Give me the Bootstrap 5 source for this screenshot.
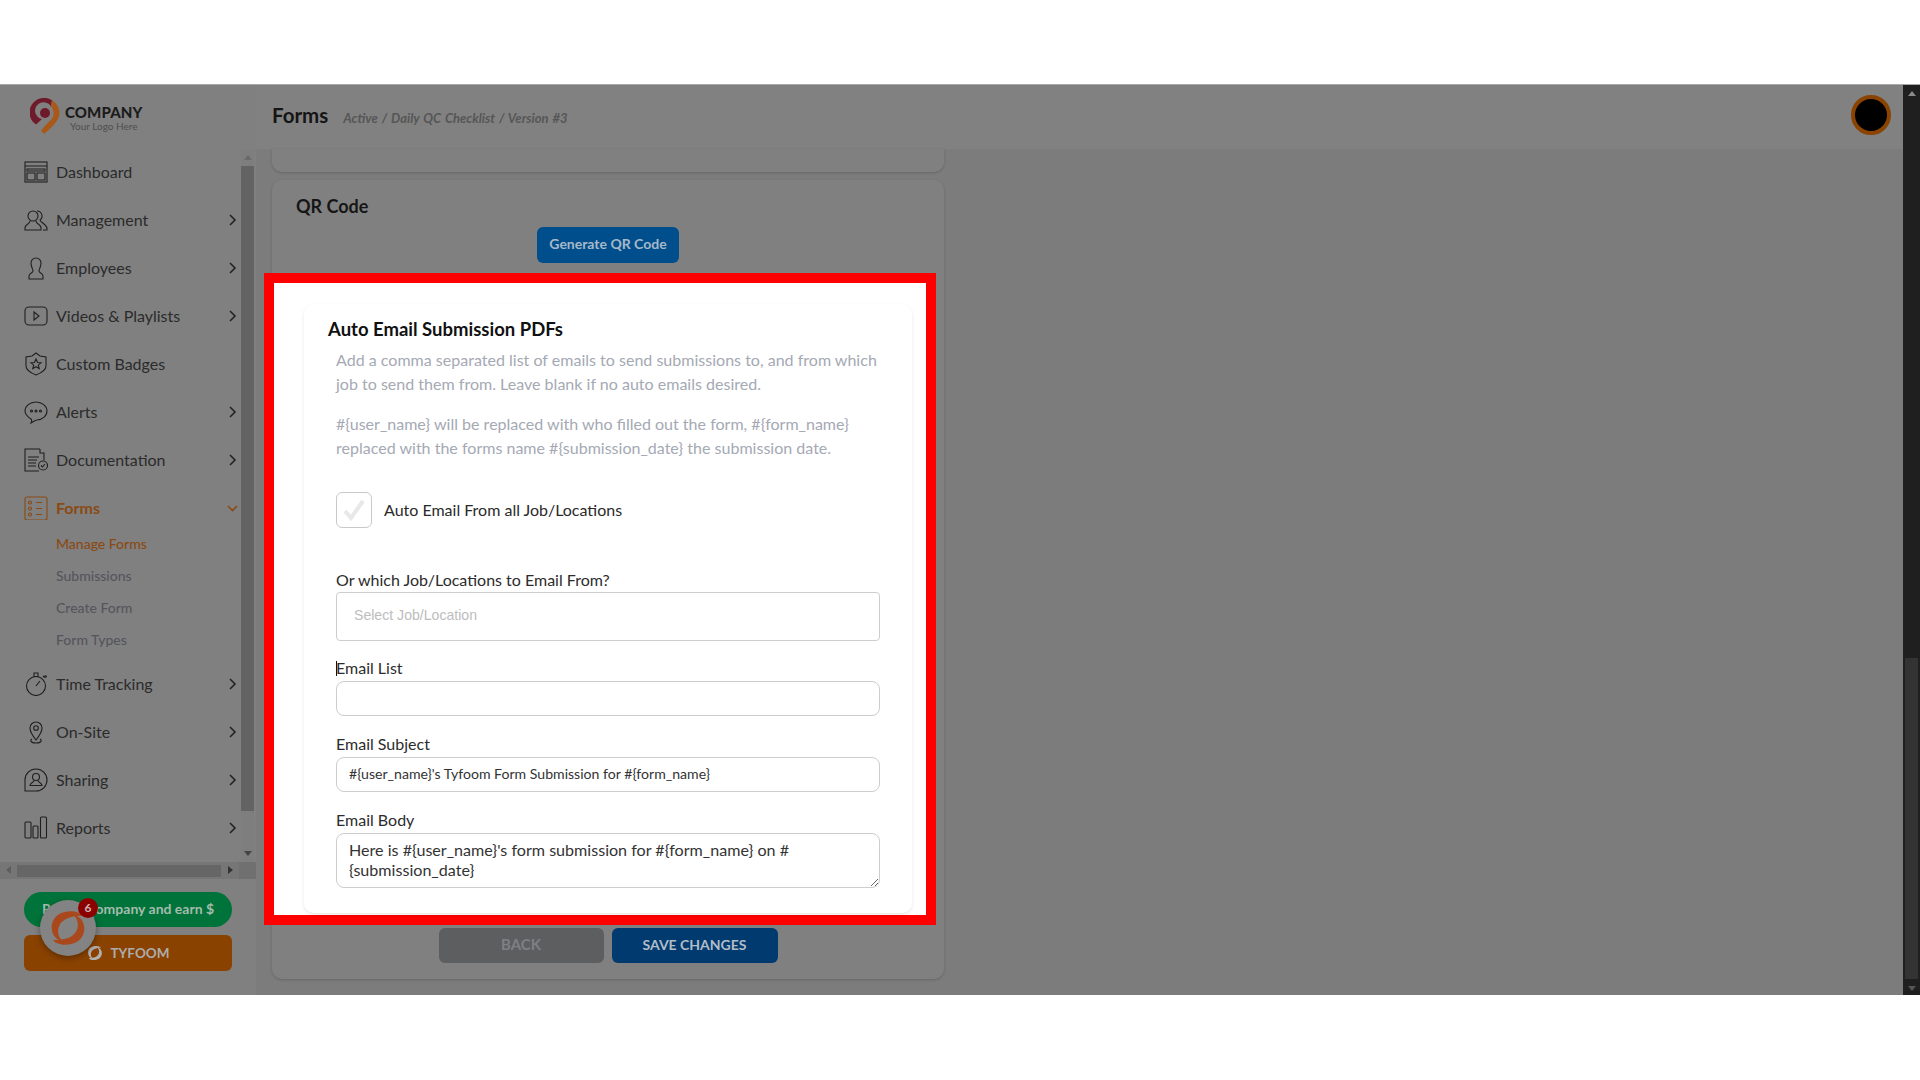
<!DOCTYPE html>
<html lang="en">
<head>
<meta charset="utf-8">
<title>Forms</title>
<link href="https://cdn.jsdelivr.net/npm/bootstrap@5.3.0/dist/css/bootstrap.min.css" rel="stylesheet">
<style>
html,body{height:100%;overflow:hidden;background:#fff;font-family:"Lato","Liberation Sans",sans-serif}
.app-shell{margin-top:84px;height:911px;background:#7c7c7c;position:relative;border-top:1px solid #a8a8a8}
.side-col{width:256px;background:#808080;flex:none}
.brand{height:65px;padding:13px 0 0 30px;gap:5px}
.brand-name{font-weight:900;font-size:15px;line-height:16px;color:#1c1c1c;letter-spacing:.1px;margin-top:6px}
.brand-tag{font-size:10px;line-height:12px;color:#4f4f4f;text-align:center}
.side-view{height:712px}
.side-list{width:241px;margin-top:-2px}
.side-item{height:48px;padding:0 5px 0 24px;font-size:16px;color:#2b2b2b;gap:8px}
.side-item svg.ico{width:24px;height:24px;flex:none;stroke:#1f1f1f;fill:none;stroke-width:1.1}
.side-item .chev{width:9px;height:12px;margin-left:auto;margin-right:-1px;stroke:#222;fill:none;stroke-width:1.6}
.side-item.on{color:#8a4a14;font-weight:700}
.side-item.on svg.ico{stroke:#8a4a14}
.side-item.on .chev{stroke:#8a4a14;width:11px;margin-right:-2px}
.sub-list{margin:-4px 0 4px}
.sub-item{height:32px;padding-left:56px;font-size:14px;color:#55565c;line-height:32px;font-weight:500}
.sub-item.on{color:#8a4a14}
.vbar{width:13px;left:241px;top:0;bottom:0;background:#7e7e7e}
.vthumb{position:absolute;left:0;right:0;top:16px;height:645px;background:#636363}
.arr-u,.arr-d{position:absolute;width:0;height:0;border-left:4px solid transparent;border-right:4px solid transparent}
.arr-u{border-bottom:5px solid #6a6a6a}
.arr-d{border-top:5px solid #444}
.hbar{height:17px;background:#767676;width:256px}
.hthumb{position:absolute;left:17px;top:3px;width:204px;height:12px;background:#666}
.h-left,.h-right{position:absolute;top:4px;width:0;height:0;border-top:4px solid transparent;border-bottom:4px solid transparent}
.h-left{left:6px;border-right:5px solid #5e5e5e}
.h-right{left:228px;border-left:5px solid #333}
.h-corner{position:absolute;left:239px;top:0;width:17px;height:17px;background:#707070}
.side-foot{padding:13px 24px 0;gap:8px}
.refer-btn{height:35px;background:#00733a;color:#a4bcab;border-radius:18px;font-size:14px;font-weight:700;border:0;padding:0 0 2px}
.tyfoom-btn{height:36px;background:#8a4200;color:#adadad;border-radius:6px;font-size:13.5px;font-weight:700;border:0;gap:8px}
.float-logo{position:absolute;left:40px;top:815px;width:56px;height:56px;border-radius:50%;background:#838383;box-shadow:0 2px 6px rgba(0,0,0,.35)}
.float-badge{position:absolute;left:38px;top:-2px;width:20px;height:20px;border-radius:50%;background:#8b0000;color:#c9b4b4;font-size:12px;font-weight:700;line-height:20px;text-align:center}
.head-bar{height:64px;background:#818181;padding:0 12px 4px 16px}
.page-title{font-size:20.5px;font-weight:700;color:#151515;margin-top:0}
.crumbs{font-size:13px;font-style:italic;font-weight:700;color:#565656;margin:7px 0 0 15px;word-spacing:1px}
.avatar{width:40px;height:40px;border-radius:50%;background:#000;border:4px solid #8a4300}
.content-col{padding-left:16px}
.dim-card{width:672px;background:#808080;border-radius:10px;box-shadow:0 1px 3px rgba(0,0,0,.18)}
.stub{height:23px;border-radius:0 0 10px 10px}
.qr-card{margin-top:8px;height:799px;padding:14px 0 0}
.qr-title{font-size:18px;font-weight:700;color:#161616;padding-left:24px;line-height:24px;margin-bottom:9px}
.gen-btn{width:142px;height:36px;background:#004f8c;color:#a7b8c8;border:0;border-radius:6px;font-size:14px;font-weight:700;padding:0 0 4px}
.hl-frame{margin:10px 8px 3px -8px;border:10px solid #fe0000;background:#fff;padding:21px 14px 3px 30px;height:652px}
.mail-card{height:609px;border-radius:10px;background:#fff;box-shadow:0 2px 4px rgba(0,0,0,.09);padding:13px 32px 0}
.mail-title{font-size:18.5px;font-weight:700;color:#111;line-height:24px;margin-left:-8px}
.mail-text{font-size:16.05px;line-height:24px;color:#a5a9b4;margin:16px 0 0}
.mail-text.first{margin-top:7px}
.check-row{margin-top:32px;gap:12px;font-size:16px;color:#2a2a2a}
.big-check{width:36px;height:36px;border:1.5px solid #c9c9c9;border-radius:6px;background:#fff;flex:none}
.lbl{font-size:16px;line-height:24px;color:#2c2c2c;margin:0 0 1px;display:block}
.fld{margin-top:16px}
.fld.list-fld{margin-top:15px}
.fld.pick{margin-top:40px}
.form-control.inp{height:35px;border:1.5px solid #cdcdcd;border-radius:8px;font-size:14.1px;color:#333;padding:0 12px 2px;font-family:inherit;box-shadow:none}
.form-control.pick-inp{height:49px;border-radius:4px;padding:0 0 3px 17px;font-family:"Liberation Sans",sans-serif;margin-top:-1px}
.form-control.pick-inp::placeholder{color:#bdbdbd;opacity:1}
textarea.form-control.inp{height:55px;font-size:16.1px;line-height:20px;padding:6px 12px}
.caret-lbl{position:relative}
.caret-lbl::before{content:"";position:absolute;left:0;top:5px;width:1px;height:15px;background:#111}
.btn-back,.btn-save{height:35px;border:0;border-radius:6px;font-weight:700;padding:0 0 3px;text-transform:uppercase}
.btn-back{width:165px;font-size:15px;background:#5d5e60;color:#7e8084}
.btn-save{width:166px;font-size:14px;background:#003a6e;color:#b2bdc8}
.page-bar{width:17px;background:#1f1f1f;flex:none;position:relative}
.page-thumb{position:absolute;left:2px;right:2px;top:573px;height:321px;background:#333}
</style>
</head>
<body>
<div class="app-shell d-flex">
  <aside class="side-col d-flex flex-column">
    <div class="brand d-flex">
      <svg width="30" height="36" viewBox="0 0 30 36"><path d="M22 2.300A14.500 14.500 0 1 0 6 26.500L12 21A8.500 8.500 0 1 1 21 8.500z" fill="#6f1a2b"/><path d="M22 2.300c4.500 2.700 7.500 7.500 7.500 12.700 0 8-9.500 16-15.500 21l-3-3.500 7-8c4-3 6-6.500 5.500-10-.3-2.500-1-4.700-2.500-6z" fill="#a8591a"/><circle cx="15" cy="15" r="5" fill="#6f1a2b"/></svg>
      <div><div class="brand-name">COMPANY</div><div class="brand-tag">Your Logo Here</div></div>
    </div>
    <div class="side-view position-relative overflow-hidden">
      <div class="side-list">
        <div class="side-item d-flex align-items-center"><svg class="ico" viewBox="0 0 24 24"><rect x="1" y="2" width="22" height="20"/><path d="M1 6h22M3 9h18v2H3zM3 13h8v7H3zM13 13h8v7h-8z"/></svg>Dashboard</div>
        <div class="side-item d-flex align-items-center"><svg class="ico" viewBox="0 0 24 24"><circle cx="9" cy="8" r="5"/><path d="M6 13c0 3-5 3-5 7v2h16v-2c0-4-5-4-5-7M13 3a5 5 0 0 1 3 9c0 2 6 4 7 8v2h-4"/></svg>Management<svg class="chev" viewBox="0 0 9 12"><path d="M2 1l5 5-5 5"/></svg></div>
        <div class="side-item d-flex align-items-center"><svg class="ico" viewBox="0 0 24 24"><path d="M12 2a5 5 0 0 1 5 5c0 4-2 6-2 8 0 2 4 2 4 5v3H5v-3c0-3 4-3 4-5 0-2-2-4-2-8a5 5 0 0 1 5-5z"/></svg>Employees<svg class="chev" viewBox="0 0 9 12"><path d="M2 1l5 5-5 5"/></svg></div>
        <div class="side-item d-flex align-items-center"><svg class="ico" viewBox="0 0 24 24"><rect x="1" y="3" width="22" height="18" rx="4"/><path d="M10 8l5 4-5 4z"/></svg>Videos &amp; Playlists<svg class="chev" viewBox="0 0 9 12"><path d="M2 1l5 5-5 5"/></svg></div>
        <div class="side-item d-flex align-items-center"><svg class="ico" viewBox="0 0 24 24"><path d="M12 1l4 3 6 1v9c0 4-5 7-10 9-5-2-10-5-10-9V5l6-1z"/><path d="M12 7l1.5 3.5 3.5.3-2.700 2.300.9 3.500L12 14.700 8.800 16.600l.9-3.500L7 10.800l3.500-.3z"/></svg>Custom Badges</div>
        <div class="side-item d-flex align-items-center"><svg class="ico" viewBox="0 0 24 24"><path d="M12 2c6 0 11 4 11 9s-5 9-10 9c-2 0-4 2-6 3 1-2 1-3 0-4-3-2-6-4-6-8 0-5 5-9 11-9z"/><circle cx="7.500" cy="11" r="1"/><circle cx="12" cy="11" r="1"/><circle cx="16.500" cy="11" r="1"/></svg>Alerts<svg class="chev" viewBox="0 0 9 12"><path d="M2 1l5 5-5 5"/></svg></div>
        <div class="side-item d-flex align-items-center"><svg class="ico" viewBox="0 0 24 24"><path d="M16 1H1v22h14M16 1v4h4v7"/><path d="M4 9h11M4 12h9M4 15h8M4 18h8"/><circle cx="19" cy="17.500" r="4.500"/><path d="M17 17.500l1.500 1.500 2.500-3"/></svg>Documentation<svg class="chev" viewBox="0 0 9 12"><path d="M2 1l5 5-5 5"/></svg></div>
        <div class="side-item on d-flex align-items-center"><svg class="ico" viewBox="0 0 24 24"><rect x="1" y="1" width="22" height="23" rx="2"/><circle cx="6" cy="6.500" r="1.500"/><circle cx="6" cy="12.500" r="1.500"/><circle cx="6" cy="18.500" r="1.500"/><path d="M12 6.500h6M12 12.500h6M12 18.500h6"/></svg>Forms<svg class="chev" viewBox="0 0 11 12"><path d="M1 4l4.500 4.500L10 4"/></svg></div>
        <div class="sub-list">
          <div class="sub-item on">Manage Forms</div>
          <div class="sub-item">Submissions</div>
          <div class="sub-item">Create Form</div>
          <div class="sub-item">Form Types</div>
        </div>
        <div class="side-item d-flex align-items-center"><svg class="ico" viewBox="0 0 24 24"><circle cx="12" cy="14" r="9.500"/><path d="M10 1h4v3.500h-4zM12 14l4-5M19 4l1.500 1.500"/><circle cx="21.500" cy="4.500" r=".8"/></svg>Time Tracking<svg class="chev" viewBox="0 0 9 12"><path d="M2 1l5 5-5 5"/></svg></div>
        <div class="side-item d-flex align-items-center"><svg class="ico" viewBox="0 0 24 24"><path d="M12 20C8 15 6 12 6 8a6 6 0 0 1 12 0c0 4-2 7-6 12z"/><circle cx="12" cy="8" r="2.300"/><path d="M8 19c-2 1-2 4 4 4s6-3 4-4"/></svg>On-Site<svg class="chev" viewBox="0 0 9 12"><path d="M2 1l5 5-5 5"/></svg></div>
        <div class="side-item d-flex align-items-center"><svg class="ico" viewBox="0 0 24 24"><path d="M1 23V12a11 11 0 1 1 11 11z"/><circle cx="12" cy="9" r="3.500"/><path d="M10 12.500c0 2-4 2-4 5h12c0-3-4-3-4-5"/></svg>Sharing<svg class="chev" viewBox="0 0 9 12"><path d="M2 1l5 5-5 5"/></svg></div>
        <div class="side-item d-flex align-items-center"><svg class="ico" viewBox="0 0 24 24"><rect x="1" y="6" width="6" height="16" rx="1"/><rect x="9" y="10" width="5" height="12" rx="1"/><rect x="16.500" y="1" width="6" height="21" rx="1"/></svg>Reports<svg class="chev" viewBox="0 0 9 12"><path d="M2 1l5 5-5 5"/></svg></div>
      </div>
      <div class="vbar position-absolute"><div class="vthumb"></div><span class="arr-u" style="left:2.500px;top:5px"></span><span class="arr-d" style="left:2.500px;top:701px"></span></div>
    </div>
    <div class="hbar position-relative"><div class="hthumb"></div><span class="h-left"></span><span class="h-right"></span><div class="h-corner"></div></div>
    <div class="side-foot d-flex flex-column">
      <button class="refer-btn d-flex align-items-center justify-content-center">Refer a company and earn $</button>
      <button class="tyfoom-btn d-flex align-items-center justify-content-center"><svg width="16" height="16" viewBox="0 0 56 56"><path d="M50 10C44 3 28 0 14 8 3 15 1 30 8 40c3 4 8 7 13 8-6-5-9-12-7-20 2-9 10-14 18-16 7-2 13-2 18-2z" fill="#b0b0b0"/><path d="M6 46c6 7 22 10 36 2 11-7 13-22 6-32-3-4-8-7-13-8 6 5 9 12 7 20-2 9-10 14-18 16-7 2-13 2-18 2z" fill="#b0b0b0"/></svg>TYFOOM</button>
    </div>
  </aside>
  <div class="flex-grow-1 d-flex flex-column">
    <header class="head-bar d-flex align-items-center">
      <div class="page-title">Forms</div>
      <div class="crumbs">Active / Daily QC Checklist / Version #3</div>
      <div class="avatar ms-auto"></div>
    </header>
    <main class="content-col flex-grow-1">
      <div class="dim-card stub"></div>
      <section class="dim-card qr-card">
        <div class="qr-title">QR Code</div>
        <div class="text-center"><button class="gen-btn btn">Generate QR Code</button></div>
        <div class="hl-frame">
          <div class="mail-card">
            <div class="mail-title">Auto Email Submission PDFs</div>
            <p class="mail-text first">Add a comma separated list of emails to send submissions to, and from which job to send them from. Leave blank if no auto emails desired.</p>
            <p class="mail-text">#{user_name} will be replaced with who filled out the form, #{form_name} replaced with the forms name #{submission_date} the submission date.</p>
            <div class="check-row d-flex align-items-center">
              <span class="big-check d-flex align-items-center justify-content-center"><svg width="24" height="24" viewBox="0 0 24 24"><path d="M3 13l6 7L21 3" fill="none" stroke="#e8e8e8" stroke-width="4"/></svg></span>
              <span>Auto Email From all Job/Locations</span>
            </div>
            <div class="fld pick">
              <label class="lbl">Or which Job/Locations to Email From?</label>
              <input class="form-control inp pick-inp" placeholder="Select Job/Location">
            </div>
            <div class="fld list-fld">
              <label class="lbl caret-lbl">Email List</label>
              <input class="form-control inp">
            </div>
            <div class="fld">
              <label class="lbl">Email Subject</label>
              <input class="form-control inp" value="#{user_name}'s Tyfoom Form Submission for #{form_name}">
            </div>
            <div class="fld">
              <label class="lbl">Email Body</label>
              <textarea class="form-control inp">Here is #{user_name}'s form submission for #{form_name} on #{submission_date}</textarea>
            </div>
          </div>
        </div>
        <div class="d-flex justify-content-center gap-2">
          <button class="btn btn-back">Back</button>
          <button class="btn btn-save">Save Changes</button>
        </div>
      </section>
    </main>
  </div>
  <div class="page-bar"><span class="arr-u" style="left:4.500px;top:6px;border-bottom-color:#8a8a8a"></span><div class="page-thumb"></div><span class="arr-d" style="left:4.500px;top:901px;border-top-color:#555"></span></div>
  <div class="float-logo d-flex align-items-center justify-content-center">
    <svg width="38" height="38" viewBox="0 0 56 56"><path d="M50 10C44 3 28 0 14 8 3 15 1 30 8 40c3 4 8 7 13 8-6-5-9-12-7-20 2-9 10-14 18-16 7-2 13-2 18-2z" fill="#a8481c"/><path d="M6 46c6 7 22 10 36 2 11-7 13-22 6-32-3-4-8-7-13-8 6 5 9 12 7 20-2 9-10 14-18 16-7 2-13 2-18 2z" fill="#a8481c"/></svg>
    <span class="float-badge">6</span>
  </div>
</div>
<script src="https://cdn.jsdelivr.net/npm/bootstrap@5.3.0/dist/js/bootstrap.bundle.min.js"></script>
</body>
</html>
